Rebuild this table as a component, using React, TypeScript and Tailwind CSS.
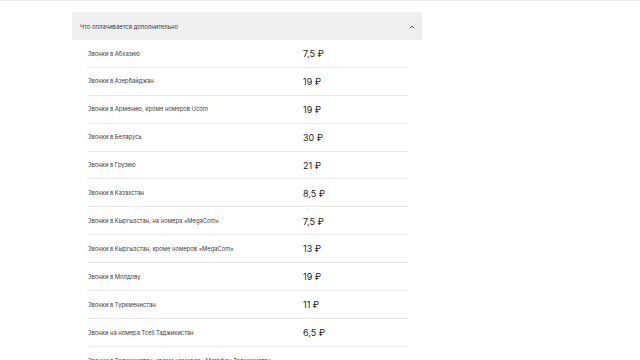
import React from "react";

const rows: [string, string][] = [
  ["Звонки в Абхазию", "7,5 ₽"],
  ["Звонки в Азербайджан", "19 ₽"],
  ["Звонки в Армению, кроме номеров Ucom", "19 ₽"],
  ["Звонки в Беларусь", "30 ₽"],
  ["Звонки в Грузию", "21 ₽"],
  ["Звонки в Казахстан", "8,5 ₽"],
  ["Звонки в Кыргызстан, на номера «MegaCom»", "7,5 ₽"],
  ["Звонки в Кыргызстан, кроме номеров «MegaCom»", "13 ₽"],
  ["Звонки в Молдову", "19 ₽"],
  ["Звонки в Туркменистан", "11 ₽"],
  ["Звонки на номера Tcell Таджикистан", "6,5 ₽"],
];

export default function App() {
  return (
    <div
      className="w-[640px] h-[360px] overflow-hidden bg-white border-t border-[#ececec]"
      style={{ fontFamily: "Inter, 'Noto Sans', sans-serif" }}
    >
      <div className="ml-[72px] mt-[11px] w-[350px]">
        <div className="h-[28px] bg-[#efefef] flex items-center justify-between pl-[8px] pr-[7px] pt-[2px]">
          <span className="text-[5.9px] text-[#3a3a3a]">Что оплачивается дополнительно</span>
          <svg width="6" height="4" viewBox="0 0 6 4" fill="none">
            <path d="M0.8 3.3 L3 1 L5.2 3.3" stroke="#555" strokeWidth="1" />
          </svg>
        </div>
        <div className="ml-[16px] w-[320px]">
          {rows.map(([label, price]) => (
            <div key={label} className="h-[27.9px] flex items-center border-b border-[#e8e8e8] pt-[1px]">
              <span className="w-[215px] text-[5.8px] text-[#3a3a3a]">{label}</span>
              <span className="text-[9px] text-[#222]">{price}</span>
            </div>
          ))}
          <div className="pt-[5px] leading-[10px]">
            <span className="text-[5.8px] text-[#3a3a3a]">
              Звонки в Таджикистан, кроме номеров «МегаФон Таджикистан»
            </span>
          </div>
        </div>
      </div>
    </div>
  );
}
